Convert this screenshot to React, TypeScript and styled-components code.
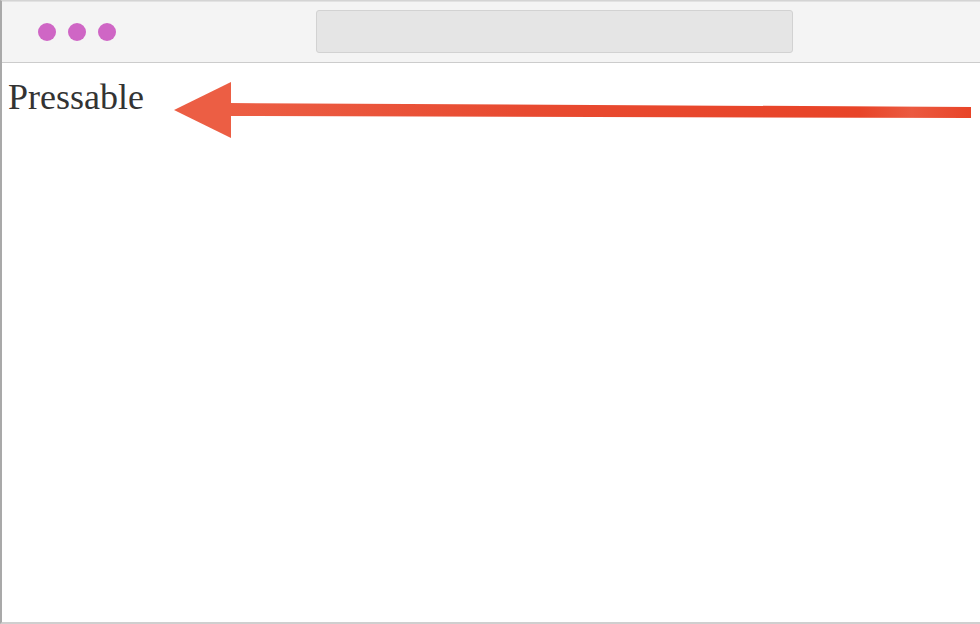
import styled, { createGlobalStyle } from "styled-components";

const GlobalStyle = createGlobalStyle`
  html, body {
    margin: 0;
    padding: 0;
    background: #ffffff;
  }
  #root {
    width: 980px;
    height: 624px;
    overflow: hidden;
  }
`;

const Window = styled.div`
  box-sizing: border-box;
  width: 980px;
  height: 624px;
  border-top: 1px solid #d4d4d4;
  border-left: 2px solid #a9a9a9;
  border-bottom: 2px solid #cfcfcf;
  display: flex;
  flex-direction: column;
  background: #ffffff;
`;

const TitleBar = styled.div`
  box-sizing: border-box;
  height: 62px;
  background: #f4f4f4;
  border-top: 1px solid #e2e2e2;
  border-bottom: 1px solid #cccccc;
  display: flex;
  align-items: center;
  padding-left: 36px;
`;

const Dots = styled.div`
  display: flex;
  gap: 12px;
`;

const Dot = styled.span`
  width: 18px;
  height: 18px;
  border-radius: 50%;
  background: #cf66c5;
`;

const AddressBar = styled.div`
  box-sizing: border-box;
  width: 477px;
  height: 43px;
  margin-left: 200px;
  margin-top: -2px;
  background: #e5e5e5;
  border: 1px solid #d2d2d2;
  border-radius: 3px;
`;

const Content = styled.div`
  flex: 1;
  display: flex;
  align-items: flex-start;
  padding: 14px 0 0 6px;
`;

const Label = styled.div`
  font-family: "Liberation Serif", "Times New Roman", serif;
  font-size: 36px;
  line-height: 40px;
  color: #333333;
`;

const Arrow = styled.svg`
  display: block;
  margin-left: 30px;
  margin-top: 4px;
  flex: none;
`;

export default function App() {
  return (
    <>
      <GlobalStyle />
      <Window>
        <TitleBar>
          <Dots>
            <Dot />
            <Dot />
            <Dot />
          </Dots>
          <AddressBar />
        </TitleBar>
        <Content>
          <Label>Pressable</Label>
          <Arrow width="800" height="60" viewBox="0 0 800 60">
            <defs>
              <linearGradient id="shaft" x1="0" y1="0" x2="1" y2="0">
                <stop offset="0" stopColor="#ec5e44" />
                <stop offset="0.4" stopColor="#e84a30" />
                <stop offset="0.85" stopColor="#e84428" />
                <stop offset="0.92" stopColor="#eb5a40" />
                <stop offset="1" stopColor="#e84428" />
              </linearGradient>
            </defs>
            <polygon points="55,22 797,26 797,37 55,35" fill="url(#shaft)" />
            <polygon points="0,29 57,1 57,57" fill="#ec5e44" />
          </Arrow>
        </Content>
      </Window>
    </>
  );
}
